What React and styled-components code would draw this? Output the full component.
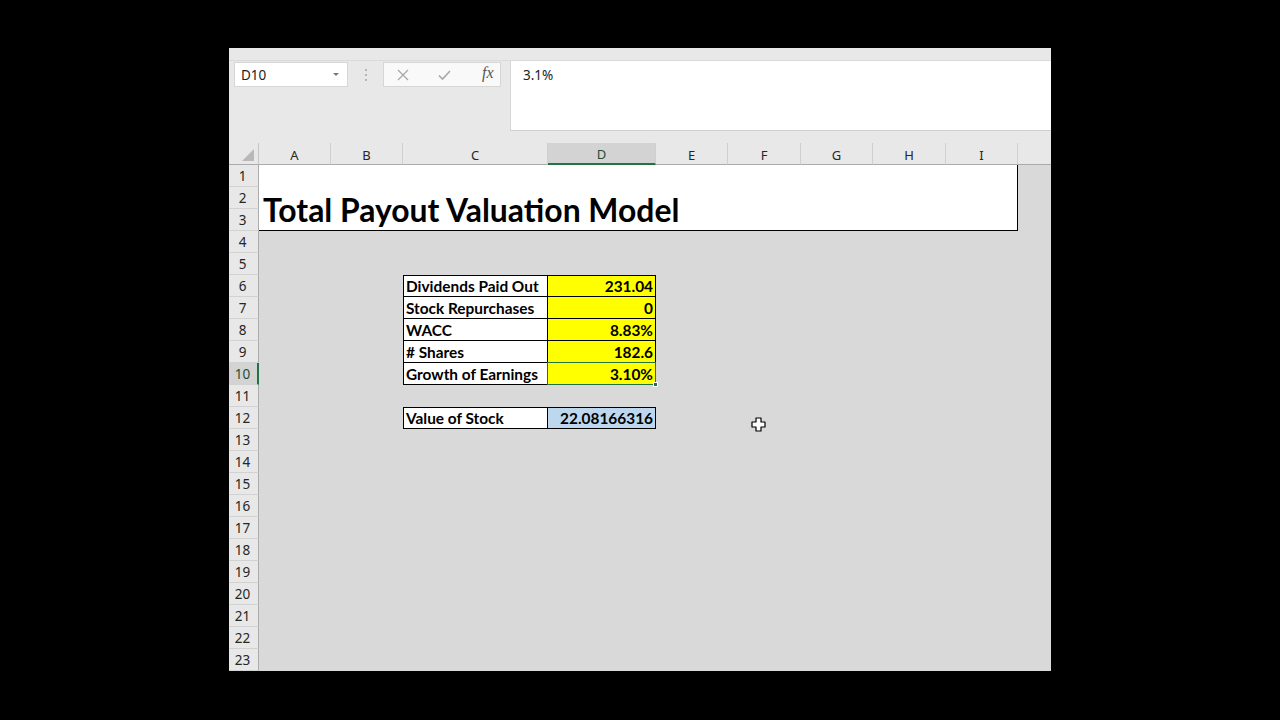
import React from "react";
import styled, { createGlobalStyle } from "styled-components";

const Global = createGlobalStyle`
  html, body { margin: 0; padding: 0; background: #000; }
  #root { height: 720px; }
`;

const Page = styled.div`
  width: 1280px;
  height: 720px;
  background: #000;
  display: flex;
  align-items: center;
  justify-content: center;
`;

const Window = styled.div`
  position: relative;
  width: 822px;
  height: 623px;
  margin-top: -1px;
  background: #e8e8e8;
  display: flex;
  flex-direction: column;
  overflow: hidden;
  font-family: "Noto Sans", "Open Sans", sans-serif;
`;

const FormulaRow = styled.div`
  display: flex;
  align-items: flex-start;
  height: 70px;
  margin-top: 12px;
  border-top: 1px solid #dadada;
`;

const NameBox = styled.div`
  margin: 1px 0 0 5px;
  width: 114px;
  height: 25px;
  box-sizing: border-box;
  background: #fff;
  border: 1px solid #d6d6d6;
  display: flex;
  align-items: center;
  justify-content: space-between;
  padding: 0 8px 0 6px;
  font-size: 13.5px;
  color: #222;
`;

const Caret = styled.span`
  width: 0;
  height: 0;
  border-left: 3px solid transparent;
  border-right: 3px solid transparent;
  border-top: 3px solid #777;
`;

const Dots = styled.div`
  width: 35px;
  height: 27px;
  display: flex;
  flex-direction: column;
  align-items: center;
  justify-content: center;
  gap: 3px;
  span {
    width: 2px;
    height: 2px;
    background: #b5b5b5;
  }
`;

const FxGroup = styled.div`
  margin-top: 1px;
  width: 118px;
  height: 25px;
  box-sizing: border-box;
  background: #f9f9f9;
  border: 1px solid #d6d6d6;
  display: flex;
  align-items: center;
  padding-left: 12px;
  gap: 27px;
`;

const FxLabel = styled.span`
  font-family: "Liberation Serif", "DejaVu Serif", serif;
  font-style: italic;
  font-size: 16px;
  color: #555;
  margin: -3px 0 0 3px;
`;

const FormulaInput = styled.div`
  margin-left: 9px;
  flex: 1;
  height: 70px;
  box-sizing: border-box;
  background: #fff;
  border-left: 1px solid #d6d6d6;
  border-bottom: 1px solid #d0d0d0;
  padding: 5px 12px;
  font-size: 13.5px;
  color: #222;
`;

const Sheet = styled.div`
  margin-top: 12px;
  flex: 1;
  display: grid;
  grid-template-columns: 30px 72px 72px 145px 108px 72px 73px 72px 73px 72px 1fr;
  grid-template-rows: repeat(24, 22px);
  background: #d9d9d9;
`;

const Corner = styled.div`
  grid-row: 1;
  grid-column: 1;
  background: #e8e8e8;
  border-right: 1px solid #c6c6c6;
  border-bottom: 1px solid #ababab;
  position: relative;
  &::after {
    content: "";
    position: absolute;
    right: 4px;
    bottom: 3px;
    width: 0;
    height: 0;
    border-left: 12px solid transparent;
    border-bottom: 12px solid #b8b8b8;
  }
`;

const ColHead = styled.div`
  grid-row: 1;
  grid-column: ${(p) => p.$col};
  box-sizing: border-box;
  background: ${(p) => (p.$active ? "#d3d3d3" : "#e8e8e8")};
  border-bottom: ${(p) => (p.$active ? "2px solid #217346" : "1px solid #ababab")};
  border-right: 1px solid #cfcfcf;
  display: flex;
  align-items: center;
  justify-content: center;
  font-size: 13px;
  color: ${(p) => (p.$active ? "#1e4d33" : "#262626")};
  padding-top: 2px;
`;

const HeadFill = styled.div`
  grid-row: 1;
  grid-column: 11;
  background: #e8e8e8;
  border-bottom: 1px solid #ababab;
`;

const RowHead = styled.div`
  grid-column: 1;
  grid-row: ${(p) => p.$row};
  box-sizing: border-box;
  background: ${(p) => (p.$active ? "#d3d3d3" : "#e8e8e8")};
  border-right: ${(p) => (p.$active ? "2px solid #217346" : "1px solid #ababab")};
  border-bottom: 1px solid #d2d2d2;
  display: flex;
  align-items: center;
  justify-content: center;
  padding: 1px ${(p) => (p.$active ? "1px" : "2px")} 0 0;
  font-size: 13.5px;
  color: ${(p) => (p.$active ? "#1e4d33" : "#262626")};
`;

const Banner = styled.div`
  grid-column: 2 / 11;
  grid-row: 2 / 5;
  background: #fff;
  border-right: 1px solid #000;
  border-bottom: 1px solid #000;
  display: flex;
  align-items: flex-end;
  padding: 0 0 1px 4px;
  font-family: "Lato", "Noto Sans", sans-serif;
  font-weight: 700;
  font-size: 31.9px;
  color: #000;
`;

const Cell = styled.div`
  position: relative;
  grid-column: ${(p) => p.$col};
  grid-row: ${(p) => p.$row};
  box-sizing: border-box;
  background: ${(p) => p.$bg || "#fff"};
  border-right: 1px solid #000;
  border-bottom: 1px solid #000;
  border-top: ${(p) => (p.$top ? "1px solid #000" : "none")};
  border-left: ${(p) => (p.$left ? "1px solid #000" : "none")};
  display: flex;
  align-items: center;
  justify-content: ${(p) => (p.$num ? "flex-end" : "flex-start")};
  padding: 0 2px 0 2px;
  font-family: "Lato", "Noto Sans", sans-serif;
  font-weight: 700;
  font-size: 15.4px;
  color: #000;
  white-space: nowrap;
`;

const Selected = styled.span`
  position: absolute;
  inset: -1px -1px -1px -1px;
  border: 1px solid #217346;
  pointer-events: none;
  &::after {
    content: "";
    position: absolute;
    right: -3px;
    bottom: -3px;
    width: 5px;
    height: 5px;
    background: #217346;
    border: 1px solid #fff;
    box-sizing: border-box;
  }
`;

const Cursor = styled.svg`
  position: absolute;
  left: 522px;
  top: 369px;
`;

const columns = ["A", "B", "C", "D", "E", "F", "G", "H", "I"];

const inputs = [
  ["Dividends Paid Out", "231.04"],
  ["Stock Repurchases", "0"],
  ["WACC", "8.83%"],
  ["# Shares", "182.6"],
  ["Growth of Earnings", "3.10%"],
];

export default function App() {
  return (
    <Page>
      <Global />
      <Window>
        <FormulaRow>
          <NameBox>
            <span>D10</span>
            <Caret />
          </NameBox>
          <Dots>
            <span />
            <span />
            <span />
          </Dots>
          <FxGroup>
            <svg width="14" height="14" viewBox="0 0 14 14">
              <path d="M2 2 L12 12 M12 2 L2 12" stroke="#a8a8a8" strokeWidth="1.3" fill="none" />
            </svg>
            <svg width="15" height="14" viewBox="0 0 15 14">
              <path d="M2 7.5 L5.5 11 L13 3" stroke="#a8a8a8" strokeWidth="1.6" fill="none" />
            </svg>
            <FxLabel>fx</FxLabel>
          </FxGroup>
          <FormulaInput>3.1%</FormulaInput>
        </FormulaRow>

        <Sheet>
          <Corner />
          {columns.map((c, i) => (
            <ColHead key={c} $col={i + 2} $active={c === "D"}>
              {c}
            </ColHead>
          ))}
          <HeadFill />
          {Array.from({ length: 23 }, (_, i) => (
            <RowHead key={i} $row={i + 2} $active={i + 1 === 10}>
              {i + 1}
            </RowHead>
          ))}

          <Banner>Total Payout Valuation Model</Banner>

          {inputs.map(([label, value], i) => (
            <React.Fragment key={label}>
              <Cell $row={i + 7} $col={4} $left $top={i === 0}>
                {label}
              </Cell>
              <Cell $row={i + 7} $col={5} $bg="#ffff00" $num $top={i === 0}>
                {value}
                {i === inputs.length - 1 && <Selected />}
              </Cell>
            </React.Fragment>
          ))}

          <Cell $row={13} $col={4} $left $top>
            Value of Stock
          </Cell>
          <Cell $row={13} $col={5} $bg="#bdd7ee" $num $top>
            22.08166316
          </Cell>
        </Sheet>

        <Cursor width="15" height="15" viewBox="0 0 15 15">
          <path
            d="M5 1 H10 V5 H14 V10 H10 V14 H5 V10 H1 V5 H5 Z"
            fill="#fff"
            stroke="#000"
            strokeWidth="1.2"
            strokeLinejoin="round"
          />
        </Cursor>
      </Window>
    </Page>
  );
}
